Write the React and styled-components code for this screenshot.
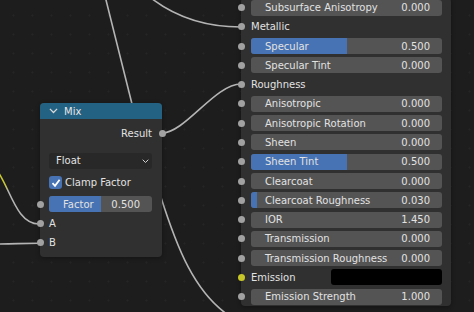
import React from 'react';
import styled, { createGlobalStyle } from 'styled-components';

const GlobalStyle = createGlobalStyle`
  html, body {
    margin: 0;
    padding: 0;
    background: #1d1d1d;
  }
  body {
    font-family: "DejaVu Sans", "Liberation Sans", sans-serif;
  }
`;

const Canvas = styled.div`
  position: relative;
  width: 474px;
  height: 312px;
  overflow: hidden;
  background-color: #1d1d1d;
  background-image: radial-gradient(circle, #252525 0.8px, transparent 1.2px);
  background-size: 19px 19px;
  background-position: 4px 6px;
  font-size: 10px;
  color: #e2e2e2;
`;

const WireLayer = styled.svg`
  position: absolute;
  left: 0;
  top: 0;
`;

const Node = styled.div`
  position: absolute;
  left: ${p => p.$x}px;
  top: ${p => p.$y}px;
  width: ${p => p.$w}px;
  background: #303030;
  border-radius: 4px;
  box-shadow: 0 1px 4px rgba(0, 0, 0, 0.35);
  display: flex;
  flex-direction: column;
`;

const Header = styled.div`
  height: 16px;
  background: #246283;
  border-radius: 4px 4px 0 0;
  display: flex;
  align-items: center;
  gap: 6px;
  padding-left: 9px;
  color: #e6e6e6;
`;

const Body = styled.div`
  display: flex;
  flex-direction: column;
  padding: 4px 0 4px;
`;

const Row = styled.div`
  position: relative;
  height: ${p => p.$h || 19.27}px;
  margin-top: ${p => p.$mt || 0}px;
  display: flex;
  align-items: center;
  justify-content: ${p => (p.$out ? 'flex-end' : 'flex-start')};
  padding: 0 ${p => p.$pr ?? 9}px 0 ${p => p.$pl ?? 10}px;
  gap: 3px;
  white-space: nowrap;
`;

const Socket = styled.span`
  position: absolute;
  top: 50%;
  ${p => (p.$right ? 'right: -3.5px;' : 'left: -3.5px;')}
  width: 7px;
  height: 7px;
  margin-top: -3.5px;
  border-radius: 50%;
  background: ${p => p.$color || '#a1a1a1'};
`;

const Field = styled.div`
  position: relative;
  flex: 1;
  height: 16px;
  background: #545454;
  border-radius: 3px;
  overflow: hidden;
  display: flex;
  align-items: center;
  justify-content: space-between;
  padding: 0 12px 0 14px;
`;

const Fill = styled.div`
  position: absolute;
  left: 0;
  top: 0;
  bottom: 0;
  background: #4772b3;
`;

const FieldText = styled.span`
  position: relative;
  color: #e2e2e2;
`;

const Dropdown = styled.div`
  flex: 1;
  height: 16px;
  background: #282828;
  border-radius: 3px;
  display: flex;
  align-items: center;
  justify-content: space-between;
  padding: 0 3px 0 7px;
`;

const Checkbox = styled.span`
  width: 13px;
  height: 13px;
  border-radius: 3px;
  background: #4772b3;
  display: flex;
  align-items: center;
  justify-content: center;
`;

const ColorSwatch = styled.div`
  margin-left: auto;
  width: 111px;
  height: 16px;
  border-radius: 3px;
  background: ${p => p.$color};
`;

const Chevron = ({ size = 8 }) => (
  <svg width={size} height={size * 0.6} viewBox="0 0 10 6">
    <polyline points="1,1 5,5 9,1" fill="none" stroke="#d8d8d8" strokeWidth="1.4" />
  </svg>
);

const bsdfRows = [
  { label: 'Subsurface Anisotropy', value: 0 },
  { label: 'Metallic', plain: true },
  { label: 'Specular', value: 0.5 },
  { label: 'Specular Tint', value: 0 },
  { label: 'Roughness', plain: true },
  { label: 'Anisotropic', value: 0 },
  { label: 'Anisotropic Rotation', value: 0 },
  { label: 'Sheen', value: 0 },
  { label: 'Sheen Tint', value: 0.5 },
  { label: 'Clearcoat', value: 0 },
  { label: 'Clearcoat Roughness', value: 0.03 },
  { label: 'IOR', value: 1.45, noFill: true },
  { label: 'Transmission', value: 0 },
  { label: 'Transmission Roughness', value: 0 },
  { label: 'Emission', color: '#000000' },
  { label: 'Emission Strength', value: 1, noFill: true },
];

const Wires = () => (
  <WireLayer width="474" height="312">
    <defs>
      <linearGradient id="yellowWire" gradientUnits="userSpaceOnUse" x1="0" y1="176" x2="14" y2="192">
        <stop offset="0.45" stopColor="#c9c936" />
        <stop offset="0.8" stopColor="#b4b4b4" />
      </linearGradient>
    </defs>
    <g fill="none" strokeWidth="1.6" strokeLinecap="round">
      <path d="M 105 -4 L 134 112" stroke="#b4b4b4" />
      <path d="M 146 -6 C 172 16, 205 27, 241 27" stroke="#b4b4b4" />
      <path d="M 162 133 C 185 133, 215 84, 241 84" stroke="#b4b4b4" />
      <path d="M 157 185 C 170 225, 190 300, 241 322" stroke="#b4b4b4" />
      <path d="M -6 166 C 10 185, 15 224, 39 224" stroke="url(#yellowWire)" />
      <path d="M -6 244 C 15 244, 20 243.3, 39 243.3" stroke="#b4b4b4" />
    </g>
  </WireLayer>
);

const BsdfNode = () => (
  <Node $x={241} $y={-2} $w={210}>
    {bsdfRows.map(r => (
      <Row key={r.label}>
        <Socket $color={r.color ? '#c7c729' : undefined} />
        {r.plain && <span>{r.label}</span>}
        {r.color && (
          <>
            <span>{r.label}</span>
            <ColorSwatch $color={r.color} />
          </>
        )}
        {r.value !== undefined && (
          <Field>
            {!r.noFill && <Fill style={{ width: `${Math.min(r.value, 1) * 100}%` }} />}
            <FieldText>{r.label}</FieldText>
            <FieldText>{r.value.toFixed(3)}</FieldText>
          </Field>
        )}
      </Row>
    ))}
  </Node>
);

const MixNode = () => (
  <Node $x={40} $y={103} $w={122}>
    <Header>
      <Chevron size={9} />
      <span>Mix</span>
    </Header>
    <Body>
      <Row $out $h={20} $pr={10}>
        <span>Result</span>
        <Socket $right />
      </Row>
      <Row $mt={8} $pl={9} $pr={10}>
        <Dropdown>
          <span>Float</span>
          <Chevron size={7} />
        </Dropdown>
      </Row>
      <Row $mt={3} $pl={9} $pr={10}>
        <Checkbox>
          <svg width="10" height="10" viewBox="0 0 10 10">
            <polyline points="1.5,5.2 4,7.8 8.6,1.8" fill="none" stroke="#ffffff" strokeWidth="1.8" />
          </svg>
        </Checkbox>
        <span>Clamp Factor</span>
      </Row>
      <Row $mt={2.3} $pl={9} $pr={10}>
        <Socket />
        <Field>
          <Fill style={{ width: '50%' }} />
          <FieldText>Factor</FieldText>
          <FieldText>0.500</FieldText>
        </Field>
      </Row>
      <Row $pl={9}>
        <Socket />
        <span>A</span>
      </Row>
      <Row $pl={9}>
        <Socket />
        <span>B</span>
      </Row>
    </Body>
  </Node>
);

export default function App() {
  return (
    <>
      <GlobalStyle />
      <Canvas>
        <Wires />
        <MixNode />
        <BsdfNode />
      </Canvas>
    </>
  );
}
